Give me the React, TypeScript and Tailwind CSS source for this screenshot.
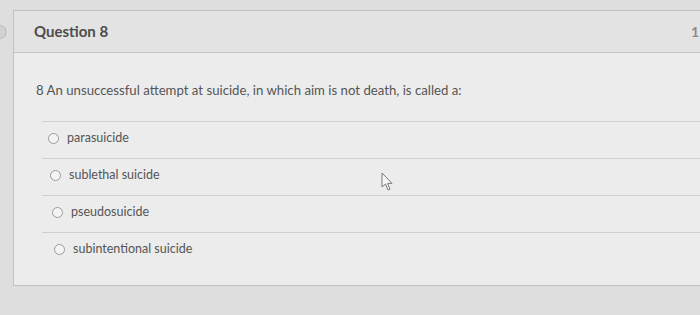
const options = ["parasuicide", "sublethal suicide", "pseudosuicide", "subintentional suicide"];

function Radio() {
  return <span className="w-[11px] h-[11px] rounded-full border border-[#9a9a9a] bg-[#f4f4f4] shrink-0" />;
}

function Cursor() {
  return (
    <svg width="14" height="21" viewBox="0 0 14 21" className="absolute left-[381px] top-[172px]">
      <path
        d="M1 1 L1 15 L4.5 12 L7 18 L9 17.2 L6.6 11.4 L11 11.4 Z"
        fill="#f6f6f6"
        stroke="#7a7a7a"
        strokeWidth="1"
        strokeLinejoin="round"
      />
    </svg>
  );
}

export default function App() {
  return (
    <div
      className="relative w-[700px] h-[315px] overflow-hidden bg-[#dedede] flex"
      style={{ fontFamily: "Lato, 'Open Sans', sans-serif" }}
    >
      {/* left edge */}
      <div className="w-[13px] shrink-0 pt-[24px]">
        <svg width="7" height="16" viewBox="0 0 7 16">
          <path d="M-4 1 Q6 1 6 8 Q6 15 -4 15" fill="#d2d2d2" stroke="#b8b8b8" strokeWidth="1" />
        </svg>
      </div>

      <div className="mt-[10px] w-[720px] h-[276px] shrink-0 border-l border-t border-b border-[#c2c2c2] bg-[#ececec] flex flex-col">
        {/* header */}
        <div className="h-[42px] bg-[#e3e3e3] border-b border-[#c4c4c4] flex items-center justify-between pl-[20px] pr-[34px]">
          <span className="text-[15px] font-bold text-[#4d4d4d]">Question 8</span>
          <span className="text-[14px] font-bold text-[#8a8a8a]">1</span>
        </div>

        {/* body */}
        <div className="pt-[28px] pl-[22px]">
          <p className="text-[13.2px] leading-[18px] text-[#555]">
            8 An unsuccessful attempt at suicide, in which aim is not death, is called a:
          </p>
          <div className="mt-[22px] ml-[6px]">
            {options.map((o, i) => (
              <div
                key={o}
                className="h-[37px] pb-[4px] border-t border-[#cfcfcf] flex items-center gap-[8px]"
                style={{ paddingLeft: 6 + i * 2 }}
              >
                <Radio />
                <span className="text-[12.5px] text-[#555]">{o}</span>
              </div>
            ))}
          </div>
        </div>
      </div>

      <Cursor />
    </div>
  );
}
